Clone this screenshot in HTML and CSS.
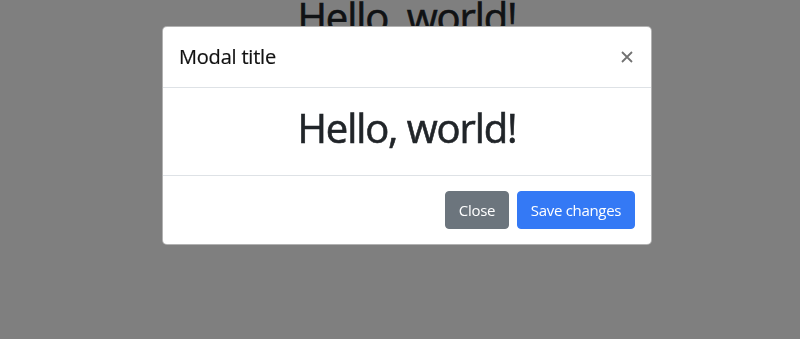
FILE: index.html
```html
<!DOCTYPE html>
<html>
<head>
<meta charset="utf-8">
<link rel="stylesheet" href="styles.css">
</head>
<body>
<div class="page">
  <h1 class="page-title">Hello, world!</h1>
</div>
<div class="backdrop"></div>
<div class="modal">
  <div class="modal-content">
    <div class="modal-header">
      <h5 class="modal-title">Modal title</h5>
      <button class="close" type="button" aria-label="Close">
        <svg width="12" height="12" viewBox="0 0 12 12"><path d="M1 1 L11 11 M11 1 L1 11" stroke="#000" stroke-width="1.8" fill="none"/></svg>
      </button>
    </div>
    <div class="modal-body">
      <h1 class="body-title">Hello, world!</h1>
    </div>
    <div class="modal-footer">
      <button class="btn btn-secondary" type="button">Close</button>
      <button class="btn btn-primary" type="button">Save changes</button>
    </div>
  </div>
</div>
</body>
</html>
```

FILE: styles.css
```css
* { box-sizing: border-box; }
html, body { margin: 0; padding: 0; }
body {
  width: 800px;
  height: 339px;
  overflow: hidden;
  background: #fff;
  color: #212529;
  font-family: "Open Sans", "Noto Sans", sans-serif;
  font-size: 16px;
  line-height: 1.5;
}
.page {
  padding-left: 14px;
  text-align: center;
}
.page-title {
  margin: -7px 0 0;
  font-size: 40px;
  font-weight: 400;
  line-height: 48px;
  letter-spacing: -1.1px;
  -webkit-text-stroke: 0.6px #212529;
}
.backdrop {
  position: fixed;
  inset: 0;
  background: rgba(0, 0, 0, 0.5);
}
.modal {
  position: fixed;
  inset: 0;
  padding-top: 26px;
  padding-left: 162px;
}
.modal-content {
  width: 490px;
  background: #fff;
  border: 1px solid rgba(0, 0, 0, 0.3);
  border-radius: 5px;
  display: flex;
  flex-direction: column;
}
.modal-header {
  display: flex;
  align-items: center;
  justify-content: space-between;
  padding: 16px;
  height: 61px;
  border-bottom: 1px solid #dee2e6;
}
.modal-title {
  margin: 0;
  font-size: 20px;
  font-weight: 400;
  line-height: 28px;
  letter-spacing: -0.2px;
  color: #111;
  -webkit-text-stroke: 0.2px #111;
}
.close {
  background: none;
  border: 0;
  padding: 0;
  margin: 0 2px 0 0;
  opacity: 0.55;
  display: flex;
  cursor: pointer;
}
.modal-body {
  padding: 16px;
  height: 88px;
  border-bottom: 1px solid #dee2e6;
}
.body-title {
  margin: 0;
  text-align: center;
  font-size: 40px;
  font-weight: 400;
  line-height: 48px;
  letter-spacing: -1.1px;
  color: #212529;
  -webkit-text-stroke: 0.6px #212529;
}
.modal-footer {
  display: flex;
  justify-content: flex-end;
  gap: 8px;
  padding: 15px 16px 15px 16px;
}
.btn {
  height: 38px;
  padding: 0 12px;
  border: 1px solid transparent;
  border-radius: 4px;
  color: #fff;
  font-family: inherit;
  font-size: 15px;
  letter-spacing: -0.3px;
}
.btn-secondary {
  background: #6c757d;
  border-color: #6c757d;
  width: 64px;
}
.btn-primary {
  background: #3479f5;
  border-color: #3479f5;
  width: 118px;
}
```
